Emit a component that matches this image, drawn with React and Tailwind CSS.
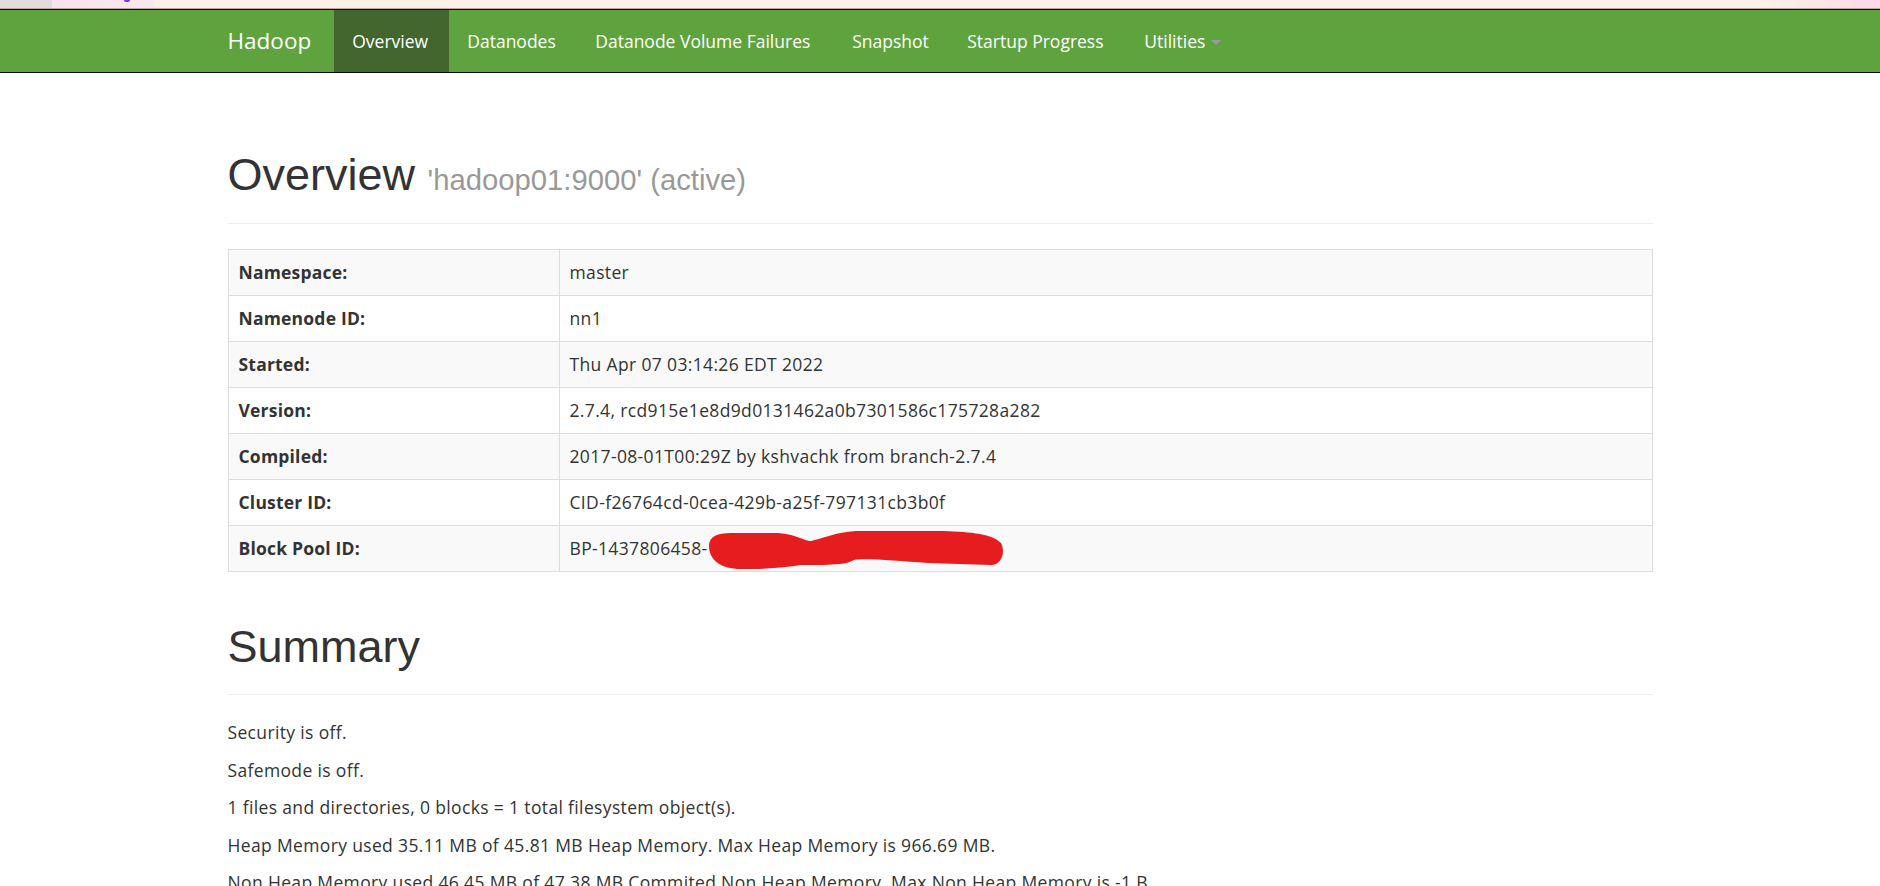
import React from "react";

const info = [
  ["Namespace:", "master"],
  ["Namenode ID:", "nn1"],
  ["Started:", "Thu Apr 07 03:14:26 EDT 2022"],
  ["Version:", "2.7.4, rcd915e1e8d9d0131462a0b7301586c175728a282"],
  ["Compiled:", "2017-08-01T00:29Z by kshvachk from branch-2.7.4"],
  ["Cluster ID:", "CID-f26764cd-0cea-429b-a25f-797131cb3b0f"],
  ["Block Pool ID:", "BP-1437806458-"],
];

const summary = [
  "Security is off.",
  "Safemode is off.",
  "1 files and directories, 0 blocks = 1 total filesystem object(s).",
  "Heap Memory used 35.11 MB of 45.81 MB Heap Memory. Max Heap Memory is 966.69 MB.",
  "Non Heap Memory used 46.45 MB of 47.38 MB Commited Non Heap Memory. Max Non Heap Memory is -1 B.",
];

// nav items with their fixed widths so the links line up
const navItems = [
  { label: "Overview", w: "w-[115px]", active: true },
  { label: "Datanodes", w: "w-[128px]" },
  { label: "Datanode Volume Failures", w: "w-[257px]" },
  { label: "Snapshot", w: "w-[115px]" },
  { label: "Startup Progress", w: "w-[177px]" },
];

function Scribble() {
  // red marker used to hide the block pool id
  return (
    <svg
      className="absolute left-[146px] top-[1px]"
      width="300"
      height="46"
      viewBox="0 0 300 46"
    >
      <path
        d="M3 19 C3 9 12 6 25 6 L72 6 C90 7 98 14 105 14 C115 12 130 5 150 4 L238 4 C265 5 287 7 295 16 C300 26 295 38 285 38 L222 36 C190 34 160 31 148 33 C140 38 128 37 118 38 L95 38 C70 42 50 42 35 42 C15 42 3 33 3 19 Z"
        fill="#e61c1f"
      />
    </svg>
  );
}

function PageHeader({ children, className }) {
  return (
    <div className={"pb-[11px] border-b border-[#eeeeee] " + className}>
      <h1 className="font-['Liberation_Sans',Arial,sans-serif] text-[45px] leading-[49.5px] text-[#333] mb-[12px]">
        {children}
      </h1>
    </div>
  );
}

export default function App() {
  return (
    <div className="h-screen overflow-hidden bg-white font-['Open_Sans',sans-serif] text-[#333]">
      {/* Browser tab strip remnant */}
      <div className="flex h-[9px] border-b border-[#c7a69c]">
        <div className="w-[52px] bg-[#e4dcdc]" />
        <div className="relative w-[103px] bg-gradient-to-r from-[#f7e2ee] to-[#fbe8ec]">
          <div className="absolute left-[72px] top-0 h-[2px] w-[6px] rounded-b bg-[#6d3be0]" />
        </div>
        <div className="flex-1 bg-[#fdf0e6]" />
        <div className="w-[110px] bg-gradient-to-r from-[#fdf0e6] to-[#fcd8e8]" />
      </div>

      {/* Navbar */}
      <header className="h-[64px] bg-[#5fa33e] border-y border-[#080808]">
        <div className="w-[1425px] mx-auto flex h-full">
          <a className="w-[106px] flex items-center text-[22.5px] text-white">
            Hadoop
          </a>
          <ul className="flex h-full">
            {navItems.map((item) => (
              <li
                key={item.label}
                className={
                  item.w +
                  " flex items-center px-[18.75px] text-[17.5px] text-white whitespace-nowrap " +
                  (item.active ? "bg-[#43662f]" : "")
                }
              >
                {item.label}
              </li>
            ))}
            <li className="flex items-center px-[18.75px] text-[17.5px] text-white">
              Utilities
              <span className="ml-[6px] mt-[2px] w-0 h-0 border-x-[5px] border-t-[5px] border-x-transparent border-t-[#9a9a9a]" />
            </li>
          </ul>
        </div>
      </header>

      <div className="w-[1425px] mx-auto">
        {/* Overview */}
        <PageHeader className="mt-[77px]">
          Overview{" "}
          <small className="text-[29.25px] leading-none text-[#999]">'hadoop01:9000' (active)</small>
        </PageHeader>

        <table className="w-full mt-[25px] border-collapse border border-[#dddddd] text-[17.5px] leading-[25px] table-fixed">
          <colgroup>
            <col className="w-[331px]" />
            <col />
          </colgroup>
          <tbody>
            {info.map(([k, v], i) => (
              <tr key={k} className={i % 2 === 0 ? "bg-[#f9f9f9]" : "bg-white"}>
                <th className="text-left font-bold tracking-[0.2px] px-[10px] py-[10px] border border-[#dddddd]">
                  {k}
                </th>
                <td className="relative tracking-[0.35px] px-[10px] py-[10px] border border-[#dddddd]">
                  {v}
                  {k === "Block Pool ID:" && <Scribble />}
                </td>
              </tr>
            ))}
          </tbody>
        </table>

        {/* Summary */}
        <PageHeader className="mt-[50px]">Summary</PageHeader>

        <div className="mt-[25px] text-[17.5px] leading-[25px] tracking-[0.35px]">
          {summary.map((line) => (
            <p key={line} className="mb-[12.5px] whitespace-nowrap">
              {line}
            </p>
          ))}
        </div>
      </div>
    </div>
  );
}
